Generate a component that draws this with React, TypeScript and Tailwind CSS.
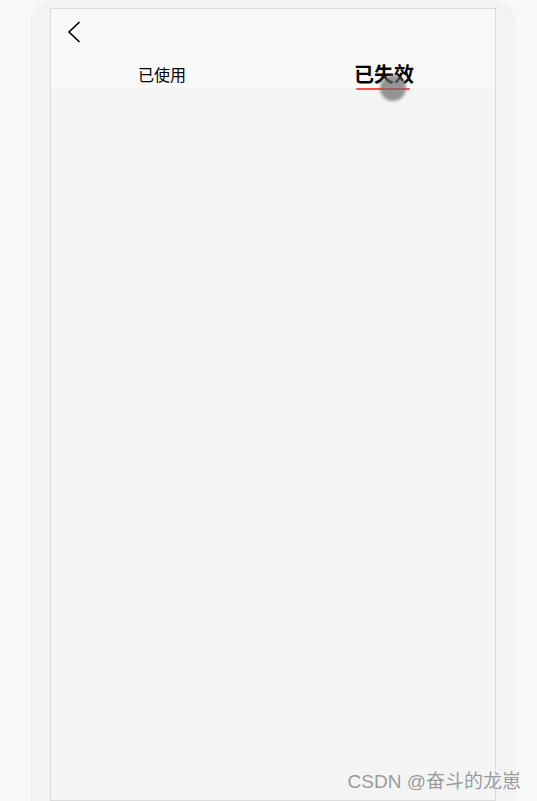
import React from 'react';

export default function App() {
  return (
    <div className="relative h-[801px] w-full overflow-hidden bg-[#f8f8f8] font-['Noto_Sans_CJK_SC',sans-serif]">
      <div className="ml-[30px] h-full w-[486px] rounded-t-[24px] bg-[#f3f3f3] px-5 pt-2">
        {/* phone frame */}
        <div className="flex h-full flex-col border border-[#dcdcdc] bg-[#f4f4f4]">
          <div className="h-[79px] bg-[#f9f9f9]">
            <div className="flex h-[50px] items-start pl-4 pt-[11px]">
              <svg width="16" height="24" viewBox="0 0 16 24" fill="none" stroke="#000" strokeWidth="1.6">
                <path d="M12.5 2 L2 12 L12.5 22" />
              </svg>
            </div>
            <div className="grid h-[29px] grid-cols-2">
              <div className="flex items-start justify-center pt-[4px]">
                <span className="text-[16px] leading-[22px] text-black">已使用</span>
              </div>
              <div className="flex items-start justify-center pt-[3px]">
                <div className="relative">
                  <span className="block text-[20px] font-bold leading-[24px] text-black">已失效</span>
                  <div className="absolute left-[2px] right-[4px] top-[26px] h-[2px] rounded bg-[#ff4d4f]" />
                  <div className="absolute left-[26px] top-[13px] h-[26px] w-[26px] rounded-full bg-[#6b6b6b] opacity-70 blur-[1.5px]" />
                </div>
              </div>
            </div>
          </div>
          <div className="flex-1" />
        </div>
      </div>
      <div className="pointer-events-none absolute right-[16px] top-[768px] text-[19px] text-[#999] [text-shadow:0_0_1px_#fff] font-['Liberation_Sans','Noto_Sans_CJK_SC',sans-serif]">
        CSDN @奋斗的龙崽
      </div>
    </div>
  );
}
